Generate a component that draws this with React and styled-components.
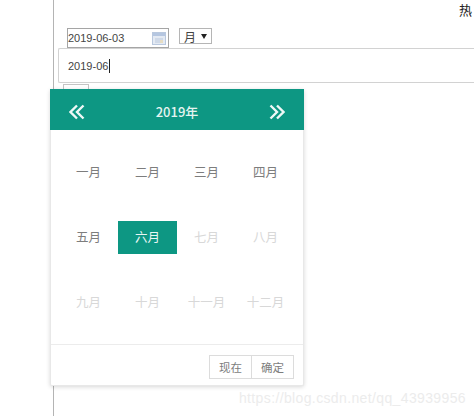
import React from 'react';
import styled, { createGlobalStyle } from 'styled-components';

const GlobalStyle = createGlobalStyle`
  html, body {
    margin: 0;
    padding: 0;
    background: #fff;
    overflow: hidden;
  }
  * {
    box-sizing: border-box;
  }
`;

const Page = styled.div`
  position: relative;
  width: 474px;
  height: 416px;
  overflow: hidden;
  font-family: "Liberation Sans", "Noto Sans CJK SC", sans-serif;
`;

const Content = styled.div`
  margin-left: 53px;
  height: 416px;
  border-left: 1px solid #b4b4b4;
`;

const HotLabel = styled.div`
  height: 28px;
  padding: 4px 0 0 405px;
  font-size: 13px;
  line-height: 14px;
  color: #222;
  white-space: nowrap;
`;

const Toolbar = styled.div`
  display: flex;
  align-items: flex-start;
  gap: 10px;
  height: 20px;
  padding-left: 13px;
`;

const DateBox = styled.div`
  display: flex;
  align-items: center;
  justify-content: space-between;
  width: 102px;
  height: 20px;
  padding: 0 2px 0 0;
  border: 1px solid #a5a5a5;
  font-size: 11px;
  color: #444;
`;

const SelectBox = styled.div`
  display: flex;
  align-items: center;
  gap: 5px;
  width: 33px;
  height: 16px;
  padding-left: 4px;
  border: 1px solid #b5b5b5;
  font-size: 12px;
  color: #444;
`;

const Caret = styled.span`
  width: 0;
  height: 0;
  border-left: 3px solid transparent;
  border-right: 3px solid transparent;
  border-top: 5px solid #222;
`;

const TextField = styled.div`
  display: flex;
  align-items: center;
  width: 430px;
  height: 35px;
  margin-left: 4px;
  padding-left: 9px;
  border: 1px solid #d2d2d2;
  border-right: none;
  border-radius: 2px 0 0 2px;
  background: #fff;
  font-size: 11px;
  color: #444;
`;

const TextCursor = styled.span`
  width: 1px;
  height: 14px;
  margin-left: 1px;
  background: #222;
`;

const HiddenButton = styled.div`
  width: 26px;
  height: 10px;
  margin: 1px 0 0 9px;
  border: 1px solid #c4c4c4;
`;

const Popup = styled.div`
  position: absolute;
  left: 50px;
  top: 89px;
  width: 254px;
  height: 297px;
  display: flex;
  flex-direction: column;
  background: #fff;
  border: 1px solid #e8e8e8;
  border-top: none;
  border-radius: 2px;
  box-shadow: 0 1px 4px rgba(0, 0, 0, 0.16);
  font-family: "Noto Sans CJK SC", "Liberation Sans", sans-serif;
`;

const PopupHeader = styled.div`
  display: flex;
  align-items: center;
  justify-content: space-between;
  height: 41px;
  margin: 0 -1px;
  padding: 4px 19px 0;
  background: #0d9783;
  color: #e4f4f0;
  font-size: 13px;
  font-weight: 500;
`;

const Arrow = styled.svg`
  display: block;
  width: 16px;
  height: 16px;
  fill: none;
  stroke: #eef8f6;
  stroke-width: 2.4;
`;

const MonthGrid = styled.div`
  display: grid;
  grid-template-columns: repeat(4, 59px);
  grid-auto-rows: 65px;
  align-items: center;
  padding: 10px 8px 0;
  height: 214px;
`;

const Month = styled.div`
  display: flex;
  align-items: center;
  justify-content: center;
  height: 33px;
  padding-bottom: 2px;
  font-size: 12.5px;
  color: ${(props) => (props.$disabled ? '#d8d8d8' : props.$active ? '#e8f6f3' : '#7d7d7d')};
  background: ${(props) => (props.$active ? '#0d9783' : 'transparent')};
`;

const PopupFooter = styled.div`
  flex: 1;
  display: flex;
  justify-content: flex-end;
  align-items: flex-start;
  padding: 10px 9px 0 0;
  border-top: 1px solid #ececec;
`;

const FooterButton = styled.div`
  display: flex;
  align-items: center;
  justify-content: center;
  width: 43px;
  height: 24px;
  margin-left: -1px;
  border: 1px solid #dcdcdc;
  font-size: 11.5px;
  color: #7d7d7d;
`;

const Watermark = styled.div`
  position: absolute;
  right: 8px;
  top: 390px;
  font-size: 14px;
  letter-spacing: 0.37px;
  color: #ececec;
  white-space: nowrap;
`;

const CalendarIcon = () => (
  <svg width="14" height="13" viewBox="0 0 14 13">
    <rect x="0.5" y="0.5" width="13" height="12" fill="#e4eaf3" stroke="#b9c8de" />
    <rect x="1" y="1" width="12" height="3" fill="#b5c6e0" />
    <rect x="3" y="6" width="8" height="5" fill="#cfd9e8" />
    <rect x="8" y="8" width="3" height="3" fill="#e6dcc2" />
  </svg>
);

const months = [
  '一月', '二月', '三月', '四月',
  '五月', '六月', '七月', '八月',
  '九月', '十月', '十一月', '十二月',
];

const App = () => {
  const current = 5;

  return (
    <Page>
      <GlobalStyle />
      <Content>
        <HotLabel>热</HotLabel>
        <Toolbar>
          <DateBox>
            2019-06-03
            <CalendarIcon />
          </DateBox>
          <SelectBox>
            月
            <Caret />
          </SelectBox>
        </Toolbar>
        <TextField>
          2019-06
          <TextCursor />
        </TextField>
        <HiddenButton />
      </Content>
      <Popup>
        <PopupHeader>
          <Arrow viewBox="0 0 16 16">
            <path d="M8 1.5 1.5 8 8 14.5M14.5 1.5 8 8l6.5 6.5" />
          </Arrow>
          2019年
          <Arrow viewBox="0 0 16 16">
            <path d="M1.5 1.5 8 8l-6.5 6.5M8 1.5 14.5 8 8 14.5" />
          </Arrow>
        </PopupHeader>
        <MonthGrid>
          {months.map((month, i) => (
            <Month key={month} $active={i === current} $disabled={i > current}>
              {month}
            </Month>
          ))}
        </MonthGrid>
        <PopupFooter>
          <FooterButton>现在</FooterButton>
          <FooterButton>确定</FooterButton>
        </PopupFooter>
      </Popup>
      <Watermark>https://blog.csdn.net/qq_43939956</Watermark>
    </Page>
  );
};

export default App;
